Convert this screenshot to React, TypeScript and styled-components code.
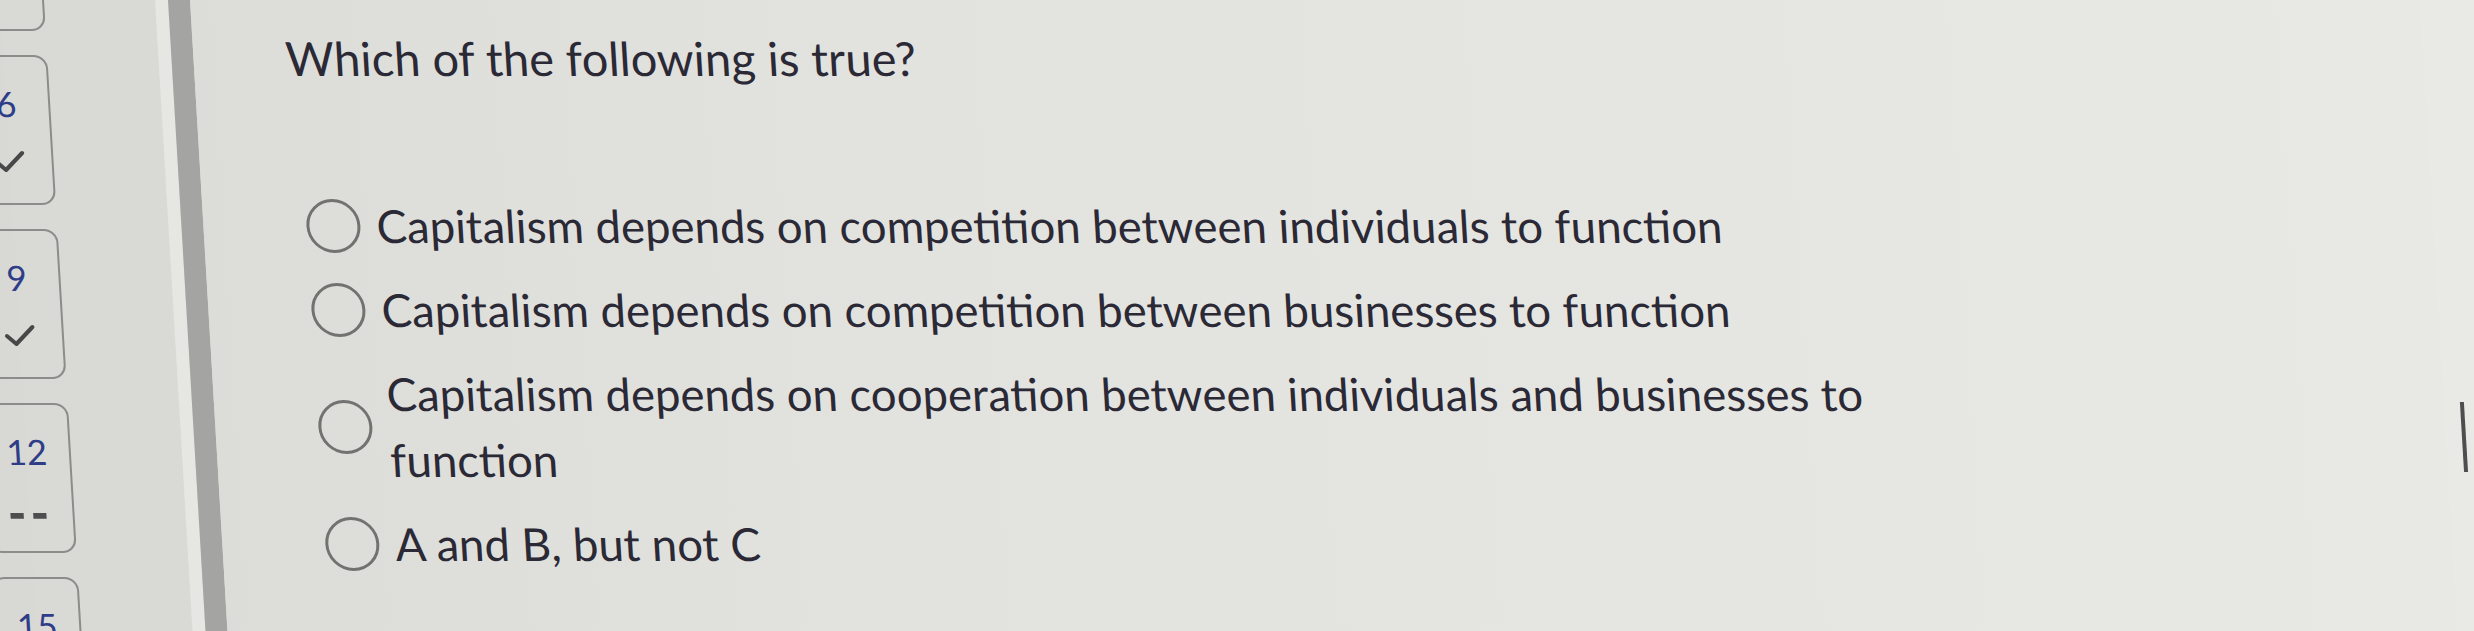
import { createGlobalStyle, styled } from "styled-components";

const GlobalStyle = createGlobalStyle`
  html, body {
    margin: 0;
    padding: 0;
    overflow: hidden;
    background: linear-gradient(90deg, #d8d8d5 0%, #e2e2df 40%, #e9e9e6 100%);
  }
  body {
    font-family: Lato, "Open Sans", "Liberation Sans", sans-serif;
  }
`;

// the photo was taken at a slight angle, so the whole page leans a little
const Page = styled.div`
  display: flex;
  width: 2440px;
  height: 631px;
  transform: skewX(3.4deg);
  transform-origin: 0 0;
`;

const Sidebar = styled.aside`
  width: 155px;
  flex: 0 0 auto;
  background: #d9d9d6;
  overflow-x: visible;
  overflow-y: clip;
`;

const BoxColumn = styled.div`
  display: flex;
  flex-direction: column;
  gap: 24px;
  margin-top: -119px;
  margin-left: -44px;
`;

const QBox = styled.div`
  width: 88px;
  height: 150px;
  box-sizing: border-box;
  border: 2.5px solid #8c8c8a;
  border-radius: 14px;
  display: flex;
  flex-direction: column;
  align-items: center;
  padding-top: 26px;
  gap: 26px;
`;

const QNum = styled.span`
  font-size: 35px;
  line-height: 40px;
  color: #2f3d88;
`;

const Dashes = styled.span`
  font-size: 50px;
  line-height: 30px;
  font-weight: 900;
  letter-spacing: 4px;
  color: #4e4e4e;
`;

const Edge = styled.div`
  width: 13px;
  flex: 0 0 auto;
  background: #e6e6e3;
`;

const Bar = styled.div`
  width: 22px;
  flex: 0 0 auto;
  background: #a4a4a2;
`;

const Content = styled.main`
  flex: 1;
  padding: 29px 0 0 92px;
  background: linear-gradient(90deg, #dcdcd9 0%, #e2e2df 30%, #e8e8e5 100%);
  color: #2a2935;
`;

const Question = styled.h2`
  margin: 0;
  font-size: 47px;
  font-weight: 400;
  line-height: 58px;
`;

const Options = styled.ul`
  list-style: none;
  margin: 106px 0 0;
  padding: 0 0 0 11px;
  display: flex;
  flex-direction: column;
  gap: 18px;
`;

const Option = styled.li`
  display: flex;
  align-items: center;
  gap: 16px;
`;

const Radio = styled.span`
  width: 54px;
  height: 54px;
  flex: 0 0 auto;
  box-sizing: border-box;
  border: 3px solid #727270;
  border-radius: 50%;
`;

const Label = styled.span`
  font-size: 45.5px;
  line-height: 66px;
  max-width: 1540px;
`;

const RightRail = styled.div`
  width: 20px;
  flex: 0 0 auto;
  display: flex;
  justify-content: flex-end;
  background: #e9e9e6;
`;

const Mark = styled.div`
  width: 4px;
  height: 70px;
  margin-top: 402px;
  background: #4e4e4e;
`;

function Check() {
  return (
    <svg width="32" height="24" viewBox="0 0 32 24">
      <path d="M3 13 L12 21 L29 4" fill="none" stroke="#484848" strokeWidth="4" strokeLinecap="round" strokeLinejoin="round" />
    </svg>
  );
}

const options = [
  "Capitalism depends on competition between individuals to function",
  "Capitalism depends on competition between businesses to function",
  "Capitalism depends on cooperation between individuals and businesses to function",
  "A and B, but not C",
];

function App() {
  return (
    <>
      <GlobalStyle />
      <Page>
        <Sidebar>
          <BoxColumn>
            <QBox>
              <QNum>3</QNum>
              <Check />
            </QBox>
            <QBox>
              <QNum>6</QNum>
              <Check />
            </QBox>
            <QBox>
              <QNum>9</QNum>
              <Check />
            </QBox>
            <QBox>
              <QNum>12</QNum>
              <Dashes>--</Dashes>
            </QBox>
            <QBox>
              <QNum>15</QNum>
            </QBox>
          </BoxColumn>
        </Sidebar>
        <Edge />
        <Bar />
        <Content>
          <Question>Which of the following is true?</Question>
          <Options>
            {options.map((o) => (
              <Option key={o}>
                <Radio />
                <Label>{o}</Label>
              </Option>
            ))}
          </Options>
        </Content>
        <RightRail>
          <Mark />
        </RightRail>
      </Page>
    </>
  );
}

export default App;
